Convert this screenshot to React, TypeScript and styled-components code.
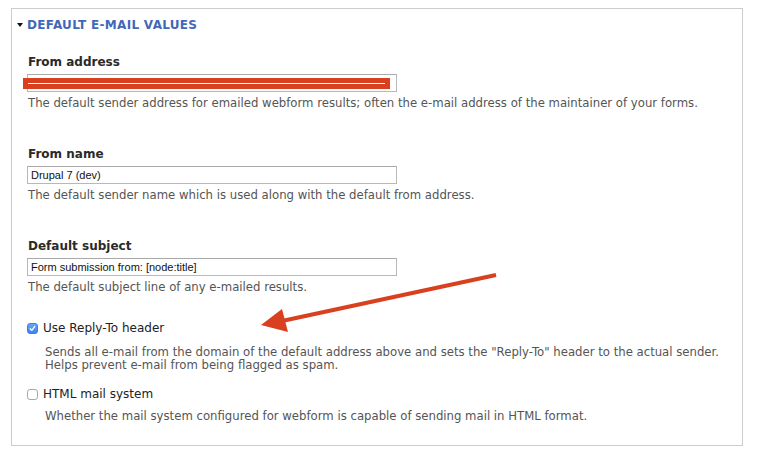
import React from "react";
import styled, { createGlobalStyle } from "styled-components";

const GlobalStyle = createGlobalStyle`
  html, body {
    margin: 0;
    padding: 0;
    background: #fff;
  }
  body {
    font-family: "DejaVu Sans", "Noto Sans", sans-serif;
  }
`;

const Page = styled.div`
  position: relative;
  width: 758px;
  height: 455px;
  padding: 8px 0 0 11px;
  box-sizing: border-box;
`;

const Fieldset = styled.div`
  width: 732px;
  height: 438px;
  box-sizing: border-box;
  border: 1px solid #cccccc;
  padding: 8px 16px 0 16px;
`;

const Legend = styled.div`
  display: flex;
  align-items: center;
  margin-left: -11px;
  height: 16px;
  margin-bottom: 21px;
  font-size: 12px;
  font-weight: bold;
  color: #3f68b8;
  letter-spacing: 0.3px;
`;

const Caret = styled.span`
  width: 0;
  height: 0;
  border-left: 3.5px solid transparent;
  border-right: 3.5px solid transparent;
  border-top: 4px solid #111;
  margin-right: 4px;
`;

const FormItem = styled.div<{ $gap: number }>`
  margin-bottom: ${(p) => p.$gap}px;
`;

const Label = styled.div`
  font-size: 12px;
  font-weight: bold;
  color: #2a2a2a;
  line-height: 16px;
  margin-bottom: 4px;
`;

const InputWrap = styled.div`
  position: relative;
  width: 370px;
  margin-left: -1px;
`;

const TextInput = styled.input`
  display: block;
  width: 370px;
  height: 18px;
  box-sizing: border-box;
  border: 1px solid #b8b8b8;
  border-top-color: #a8a8a8;
  padding: 0 3px;
  font-family: "Liberation Sans", Arial, sans-serif;
  font-size: 11px;
  color: #111;
  outline: none;
`;

const Redaction = styled.div`
  position: absolute;
  left: -4px;
  top: 4px;
  width: 367px;
  height: 11px;
  background: #d8401f;
  &::after {
    content: "";
    position: absolute;
    left: 5px;
    right: 5px;
    top: 5px;
    height: 1px;
    background: #fff;
  }
`;

const Description = styled.div<{ $indent?: number; $top?: number }>`
  font-size: 11.7px;
  color: #555;
  line-height: 13px;
  margin-top: ${(p) => p.$top ?? 5}px;
  padding-left: ${(p) => p.$indent ?? 0}px;
`;

const CheckRow = styled.label`
  display: flex;
  align-items: center;
  height: 16px;
  margin-left: -1px;
  font-size: 12px;
  color: #222;
  gap: 5px;
`;

const Box = styled.span<{ $checked?: boolean }>`
  display: inline-flex;
  align-items: center;
  justify-content: center;
  width: 11px;
  height: 11px;
  box-sizing: border-box;
  border-radius: 3px;
  background: ${(p) => (p.$checked ? "linear-gradient(#6aa6f7, #3f82ec)" : "#fff")};
  border: 1px solid ${(p) => (p.$checked ? "#3d7de0" : "#a9a9a9")};
`;

const CheckItem = styled.div<{ $gap: number }>`
  margin-bottom: ${(p) => p.$gap}px;
`;

const ArrowSvg = styled.svg`
  position: absolute;
  left: 0;
  top: 0;
  pointer-events: none;
`;

const Check = () => (
  <svg width="7" height="7" viewBox="0 0 7 7">
    <path d="M1.2 3.8 L2.8 5.4 L5.8 1.4" fill="none" stroke="#fff" strokeWidth="1.3" strokeLinecap="round" strokeLinejoin="round" />
  </svg>
);

export default function App() {
  return (
    <>
      <GlobalStyle />
      <Page>
        <Fieldset>
          <Legend>
            <Caret />
            DEFAULT E-MAIL VALUES
          </Legend>

          <FormItem $gap={36}>
            <Label>From address</Label>
            <InputWrap>
              <TextInput type="text" defaultValue="" />
              <Redaction />
            </InputWrap>
            <Description>
              The default sender address for emailed webform results; often the e-mail address of the maintainer of your forms.
            </Description>
          </FormItem>

          <FormItem $gap={36}>
            <Label>From name</Label>
            <InputWrap>
              <TextInput type="text" defaultValue="Drupal 7 (dev)" />
            </InputWrap>
            <Description>The default sender name which is used along with the default from address.</Description>
          </FormItem>

          <FormItem $gap={26}>
            <Label>Default subject</Label>
            <InputWrap>
              <TextInput type="text" defaultValue="Form submission from: [node:title]" />
            </InputWrap>
            <Description>The default subject line of any e-mailed results.</Description>
          </FormItem>

          <CheckItem $gap={14}>
            <CheckRow>
              <Box $checked>
                <Check />
              </Box>
              Use Reply-To header
            </CheckRow>
            <Description $indent={17} $top={10}>
              Sends all e-mail from the domain of the default address above and sets the "Reply-To" header to the actual sender.
              <br />
              Helps prevent e-mail from being flagged as spam.
            </Description>
          </CheckItem>

          <CheckItem $gap={0}>
            <CheckRow>
              <Box />
              HTML mail system
            </CheckRow>
            <Description $indent={17} $top={8}>
              Whether the mail system configured for webform is capable of sending mail in HTML format.
            </Description>
          </CheckItem>
        </Fieldset>

        <ArrowSvg width="758" height="455" viewBox="0 0 758 455">
          <line x1="496" y1="275" x2="282" y2="321" stroke="#d8401f" strokeWidth="4" />
          <polygon points="261,325 282,309 288,332" fill="#d8401f" />
        </ArrowSvg>
      </Page>
    </>
  );
}
